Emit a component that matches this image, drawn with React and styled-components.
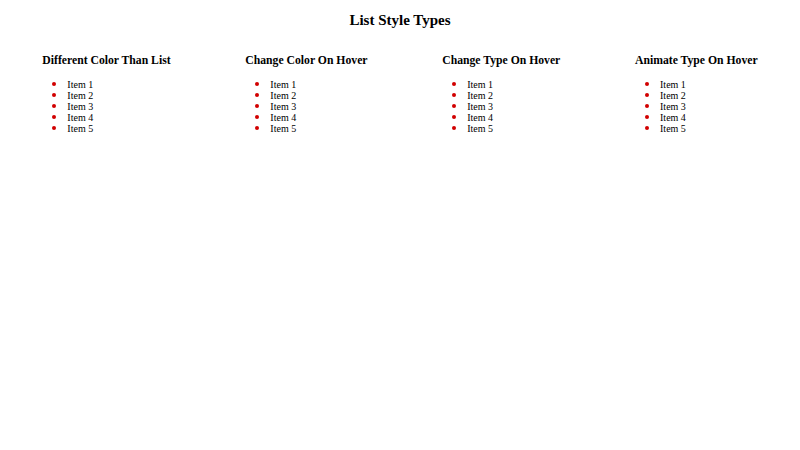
import React from 'react';
import styled, { createGlobalStyle, css, keyframes } from 'styled-components'

const GlobalStyle = createGlobalStyle`
  html {
    font-size: 10px;
  }
  body {
    margin: 0;
    padding: 0 5px;
    font-family: "Liberation Serif", "Times New Roman", serif;
    font-size: 10px;
    color: #000;
    background: #fff;
  }
`

const items = ['Item 1', 'Item 2', 'Item 3', 'Item 4', 'Item 5']

const lists = [
  { title: 'Different Color Than List', variant: 'plain' },
  { title: 'Change Color On Hover', variant: 'color' },
  { title: 'Change Type On Hover', variant: 'type' },
  { title: 'Animate Type On Hover', variant: 'animate' },
]

function App() {
  return (
    <>
      <GlobalStyle />
      <Title>List Style Types</Title>
      <Columns>
        {lists.map((list) => (
          <Column key={list.title}>
            <ColumnTitle>{list.title}</ColumnTitle>
            <List>
              {items.map((item) => (
                <ListItem key={item} $variant={list.variant}>{item}</ListItem>
              ))}
            </List>
          </Column>
        ))}
      </Columns>
    </>
  )
}

const Title = styled.h2`
  font-size: 15px;
  font-weight: bold;
  text-align: center;
  margin: 12.45px 0;
`

const Columns = styled.div`
  display: flex;
  justify-content: space-around;
`

const Column = styled.div`
  display: block;
`

const ColumnTitle = styled.h3`
  font-size: 11.7px;
  font-weight: bold;
  margin: 11.7px 0;
  white-space: nowrap;
`

const List = styled.ul`
  margin: 10px 0;
  padding-left: 25px;
  list-style-type: disc;
`

const pulse = keyframes`
  0% { color: #d10000; }
  50% { color: #0a5fd1; }
  100% { color: #d10000; }
`

const ListItem = styled.li`
  font-size: 10px;
  line-height: 11px;
  height: 11px;

  &::marker {
    color: #d10000;
    font-size: 13px;
  }

  ${({ $variant }) => $variant === 'color' && css`
    &:hover::marker {
      color: #0a5fd1;
    }
  `}

  ${({ $variant }) => $variant === 'type' && css`
    &:hover {
      list-style-type: square;
    }
  `}

  ${({ $variant }) => $variant === 'animate' && css`
    &:hover {
      list-style-type: circle;
    }
    &:hover::marker {
      animation: ${pulse} 1s infinite;
    }
  `}
`

export default App
